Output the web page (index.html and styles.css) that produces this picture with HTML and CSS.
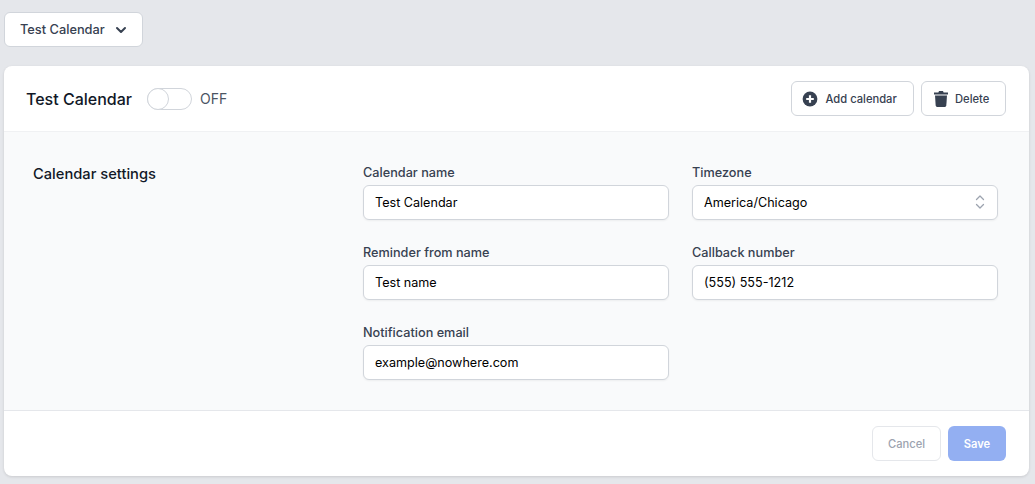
FILE: index.html
```html
<!DOCTYPE html>
<html lang="en">
<head>
    <meta charset="UTF-8">
    <meta name="viewport" content="width=device-width, initial-scale=1.0">
    <title>Calendar settings</title>
    <link rel="stylesheet" href="styles.css">
</head>
<body>

<div class="picker">
    <button class="picker-btn" type="button">
        Test Calendar
        <svg width="20" height="20" viewBox="0 0 20 20" fill="none" stroke="#374151" stroke-width="2" stroke-linecap="round" stroke-linejoin="round"><path d="M6 8l4 4 4-4"/></svg>
    </button>
</div>

<div class="card">
    <header class="card-head">
        <h1>Test Calendar</h1>
        <div class="toggle"><span class="knob"></span></div>
        <span class="toggle-label">OFF</span>
        <div class="head-actions">
            <button class="btn btn-add" type="button">
                <svg width="16" height="16" viewBox="0 0 16 16"><circle cx="8" cy="8" r="7.4" fill="#374151"/><path d="M8 4.200v7.600M4.200 8h7.600" stroke="#fff" stroke-width="2.200"/></svg>
                Add calendar
            </button>
            <button class="btn btn-delete" type="button">
                <svg width="14" height="16" viewBox="0 0 14 16" fill="#374151"><path d="M5 0h4l.6 1.400H14v2H0v-2h4.400z"/><path d="M1 4.400h12l-.7 10.200c-.1.8-.6 1.400-1.500 1.400H3.200c-.9 0-1.400-.6-1.500-1.400z"/></svg>
                Delete
            </button>
        </div>
    </header>

    <section class="card-body">
        <h2>Calendar settings</h2>
        <div class="field-grid">
            <div class="field">
                <label for="cal-name">Calendar name</label>
                <input id="cal-name" type="text" value="Test Calendar">
            </div>
            <div class="field">
                <label for="tz">Timezone</label>
                <div class="select-wrap">
                    <select id="tz"><option>America/Chicago</option></select>
                    <svg class="select-icon" width="20" height="20" viewBox="0 0 20 20" fill="none" stroke="#9ca3af" stroke-width="1.300" stroke-linecap="round" stroke-linejoin="round"><path d="M6.500 7.500L10 4l3.500 3.500M6.500 12.500L10 16l3.500-3.500"/></svg>
                </div>
            </div>
            <div class="field">
                <label for="from-name">Reminder from name</label>
                <input id="from-name" type="text" value="Test name">
            </div>
            <div class="field">
                <label for="callback">Callback number</label>
                <input id="callback" type="text" value="(555) 555-1212">
            </div>
            <div class="field">
                <label for="email">Notification email</label>
                <input id="email" type="text" value="example@nowhere.com">
            </div>
        </div>
    </section>

    <footer class="card-foot">
        <button class="btn btn-cancel" type="button">Cancel</button>
        <button class="btn btn-save" type="button">Save</button>
    </footer>
</div>

</body>
</html>
```

FILE: styles.css
```css
* {
    box-sizing: border-box;
}
body {
    margin: 0;
    padding: 12px 6px 8px 4px;
    background-color: #e5e7eb;
    font-family: Inter, "Noto Sans", sans-serif;
    color: #111827;
}
button {
    font-family: inherit;
}
.picker {
    margin-bottom: 19px;
}
.picker-btn {
    display: inline-flex;
    align-items: center;
    gap: 6px;
    height: 35px;
    width: 139px;
    padding: 0 0 0 15px;
    background-color: #fff;
    border: 1px solid #d1d5db;
    border-radius: 6px;
    font-size: 12.800px;
    font-weight: 500;
    color: #374151;
    white-space: nowrap;
}
.card {
    background-color: #fff;
    border-radius: 8px;
    box-shadow: 0 1px 3px rgba(0, 0, 0, 0.12);
    overflow: hidden;
}
.card-head {
    display: flex;
    align-items: center;
    height: 66px;
    padding: 0 23px 0 22px;
    border-bottom: 1px solid #f0f1f3;
}
.card-head h1 {
    margin: 0;
    font-size: 16px;
    line-height: 28px;
    font-weight: 500;
}
.toggle {
    width: 45px;
    height: 22px;
    margin-left: 15px;
    background-color: #fff;
    border: 1px solid #d1d5db;
    border-radius: 11px;
    position: relative;
}
.knob {
    position: absolute;
    left: -1px;
    top: -1px;
    width: 22px;
    height: 22px;
    background-color: #fff;
    border: 1px solid #d1d5db;
    border-radius: 50%;
}
.toggle-label {
    margin-left: 8px;
    font-size: 14px;
    color: #4b5563;
}
.head-actions {
    display: flex;
    gap: 7px;
    margin-left: auto;
}
.btn {
    display: inline-flex;
    align-items: center;
    justify-content: center;
    height: 35px;
    background-color: #fff;
    border: 1px solid #d1d5db;
    border-radius: 6px;
    font-size: 11.200px;
    font-weight: 500;
    color: #374151;
}
.btn-add {
    width: 123px;
    justify-content: flex-start;
    gap: 7.500px;
    padding: 0 0 0 10px;
}
.btn-delete {
    width: 85px;
    justify-content: flex-start;
    gap: 7px;
    padding: 0 0 0 12px;
}
.card-body {
    display: flex;
    height: 279px;
    padding: 31px 30px 0 29px;
    background-color: #f9fafb;
    border-bottom: 1px solid #e5e7eb;
}
.card-body h2 {
    margin: 1px 0 0;
    width: 330px;
    font-size: 14.700px;
    line-height: 20px;
    font-weight: 500;
}
.field-grid {
    display: grid;
    grid-template-columns: 306px 306px;
    column-gap: 23px;
    row-gap: 23px;
    align-content: start;
}
.field label {
    display: block;
    margin-bottom: 3px;
    font-size: 12.700px;
    line-height: 19px;
    font-weight: 500;
    color: #374151;
}
.field input,
.field select {
    display: block;
    width: 100%;
    height: 35px;
    padding: 0 11px;
    background-color: #fff;
    border: 1px solid #d1d5db;
    border-radius: 6px;
    box-shadow: 0 1px 2px rgba(0, 0, 0, 0.05);
    font-family: inherit;
    font-size: 12.600px;
    color: #000;
    appearance: none;
}
.select-wrap {
    position: relative;
}
.select-icon {
    position: absolute;
    right: 8px;
    top: 7px;
}
.card-foot {
    display: flex;
    justify-content: flex-end;
    gap: 7px;
    height: 65px;
    padding: 15px 23px 0 0;
}
.btn-cancel {
    width: 69px;
    border-color: #e5e7eb;
    color: #9ca3af;
}
.btn-save {
    width: 58px;
    background-color: #93aff2;
    border: none;
    color: #fff;
    font-weight: 600;
}
```
